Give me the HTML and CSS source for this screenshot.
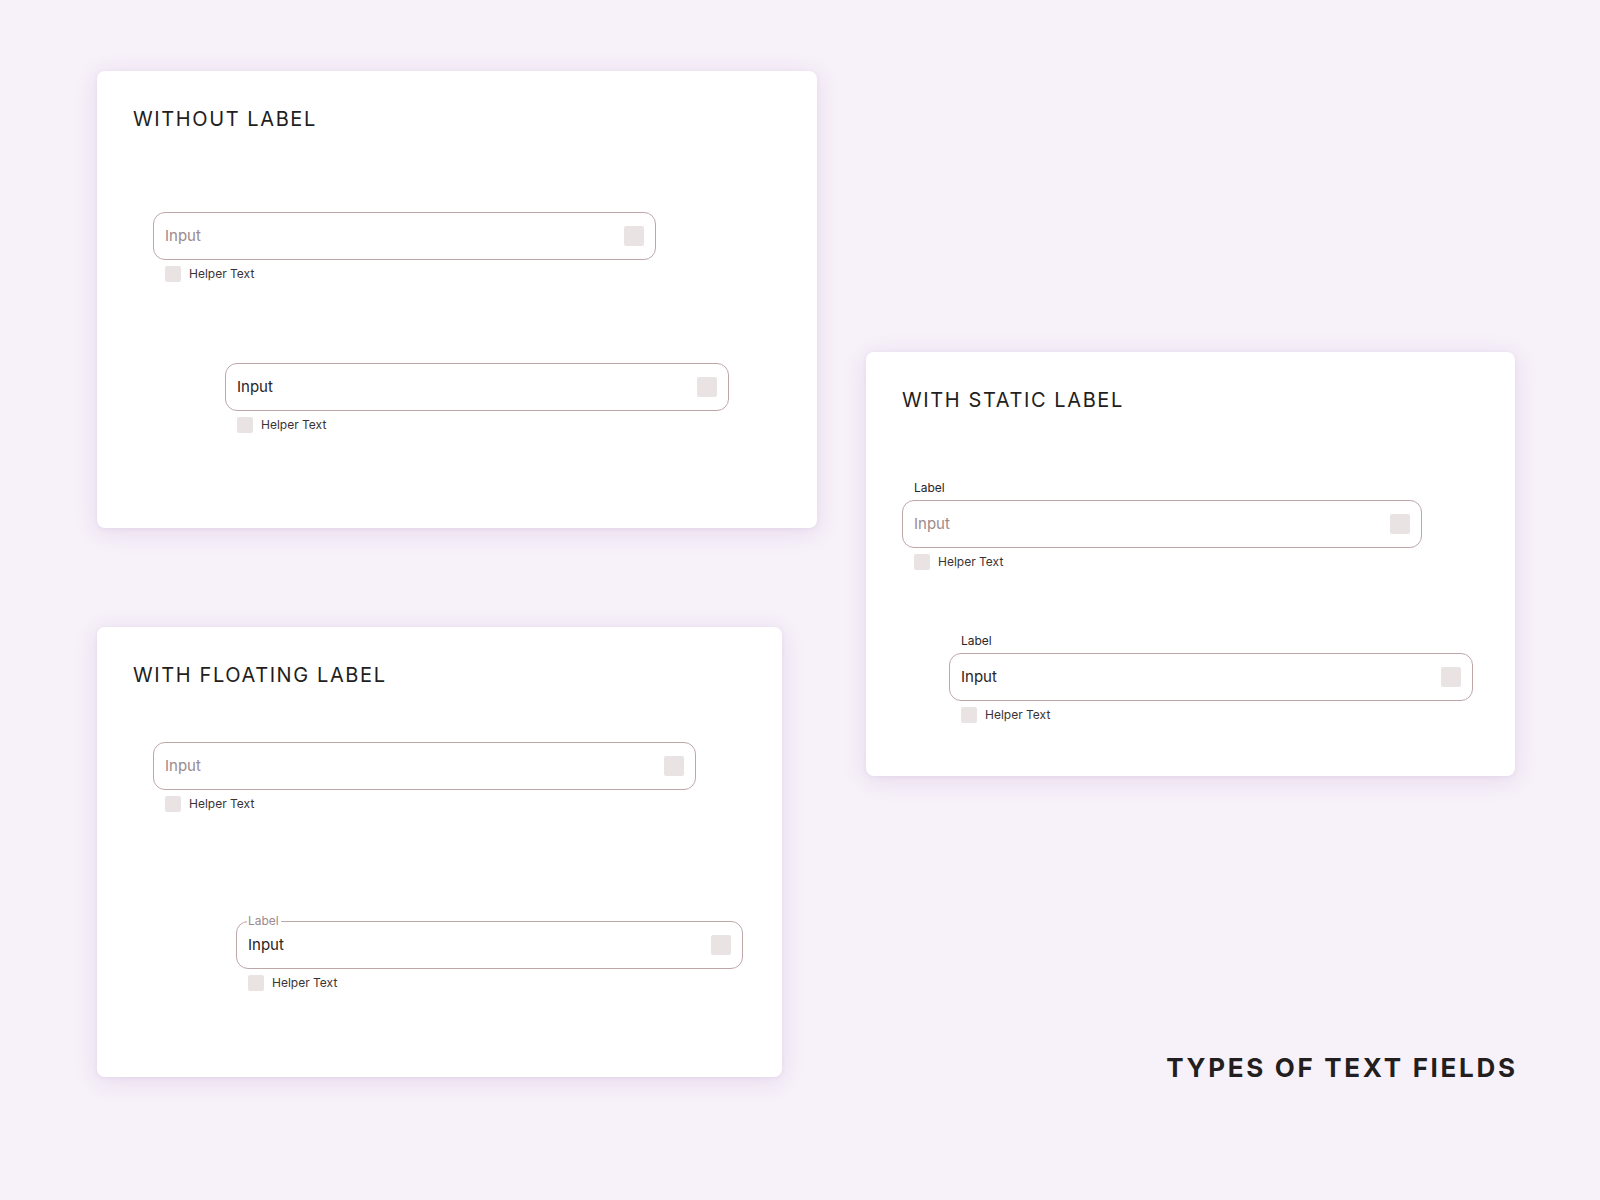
FILE: index.html
```html
<!DOCTYPE html>
<html lang="en">
<head>
<meta charset="utf-8">
<title>Types of Text Fields</title>
<link rel="stylesheet" href="styles.css">
</head>
<body>
<main class="board">
  <div class="col col-left">
    <section class="card card-without">
      <h2 class="card-title">WITHOUT LABEL</h2>
      <div class="field f-without-1">
        <div class="input-box"><span class="input-text placeholder">Input</span><span class="input-icon"></span></div>
        <div class="helper"><span class="helper-icon"></span><span class="helper-text">Helper Text</span></div>
      </div>
      <div class="field f-without-2">
        <div class="input-box"><span class="input-text">Input</span><span class="input-icon"></span></div>
        <div class="helper"><span class="helper-icon"></span><span class="helper-text">Helper Text</span></div>
      </div>
    </section>

    <section class="card card-floating">
      <h2 class="card-title">WITH FLOATING LABEL</h2>
      <div class="field f-floating-1">
        <div class="input-box"><span class="input-text placeholder">Input</span><span class="input-icon"></span></div>
        <div class="helper"><span class="helper-icon"></span><span class="helper-text">Helper Text</span></div>
      </div>
      <div class="field f-floating-2">
        <div class="input-box"><span class="float-label">Label</span><span class="input-text">Input</span><span class="input-icon"></span></div>
        <div class="helper"><span class="helper-icon"></span><span class="helper-text">Helper Text</span></div>
      </div>
    </section>
  </div>

  <div class="col col-right">
    <section class="card card-static">
      <h2 class="card-title">WITH STATIC LABEL</h2>
      <div class="field f-static-1">
        <span class="field-label">Label</span>
        <div class="input-box"><span class="input-text placeholder">Input</span><span class="input-icon"></span></div>
        <div class="helper"><span class="helper-icon"></span><span class="helper-text">Helper Text</span></div>
      </div>
      <div class="field f-static-2">
        <span class="field-label">Label</span>
        <div class="input-box"><span class="input-text">Input</span><span class="input-icon"></span></div>
        <div class="helper"><span class="helper-icon"></span><span class="helper-text">Helper Text</span></div>
      </div>
    </section>
    <h1 class="board-title">TYPES OF TEXT FIELDS</h1>
  </div>
</main>
</body>
</html>
```

FILE: styles.css
```css
* { box-sizing: border-box; }

html, body {
  margin: 0;
  padding: 0;
}

body {
  background: #f7f1f9;
  font-family: Inter, "Noto Sans", "Liberation Sans", sans-serif;
  color: #2a2426;
  width: 1600px;
  height: 1200px;
  overflow: hidden;
}

.board {
  display: flex;
  align-items: flex-start;
  gap: 49px;
  padding: 71px 0 0 97px;
}

.col {
  display: flex;
  flex-direction: column;
  align-items: flex-start;
}

.col-left { gap: 99px; }

.card {
  background: #ffffff;
  border-radius: 8px;
  box-shadow: 0 4px 22px rgba(196, 168, 210, 0.32), 0 1px 4px rgba(196, 168, 210, 0.18);
  padding: 36px 36px 0 36px;
  display: flex;
  flex-direction: column;
  align-items: flex-start;
}

.card-without { width: 720px; height: 457px; }
.card-floating { width: 685px; height: 450px; }
.card-static { width: 649px; height: 424px; margin-top: 281px; }

.card-title {
  margin: 0;
  font-size: 20px;
  line-height: 24px;
  font-weight: 400;
  letter-spacing: 1.6px;
  color: #231e20;
}

.field {
  display: flex;
  flex-direction: column;
  gap: 6px;
}

.f-without-1 { width: 503px; margin: 81px 0 0 20px; }
.f-without-2 { width: 504px; margin: 81px 0 0 92px; }
.f-floating-1 { width: 543px; margin: 55px 0 0 20px; }
.f-floating-2 { width: 507px; margin: 109px 0 0 103px; }
.f-static-1 { width: 520px; margin: 68px 0 0 0; }
.f-static-2 { width: 524px; margin: 63px 0 0 47px; }

.field-label {
  display: block;
  font-size: 12px;
  line-height: 16px;
  color: #2a2426;
  padding-left: 12px;
  margin-bottom: -2px;
}

.input-box {
  position: relative;
  height: 48px;
  border: 1px solid #bfa6a8;
  border-radius: 12px;
  display: flex;
  align-items: center;
  justify-content: space-between;
  padding: 0 11px 0 11px;
}

.input-text {
  font-size: 15px;
  line-height: 20px;
  color: #2a2426;
}

.input-text.placeholder { color: #9c8a8c; }

.input-icon {
  width: 20px;
  height: 20px;
  border-radius: 2px;
  background: #e9e3e4;
}

.float-label {
  position: absolute;
  top: -9px;
  left: 10px;
  padding: 0 2px 0 1px;
  background: #ffffff;
  font-size: 12px;
  line-height: 16px;
  color: #9c8a8c;
}

.helper {
  display: flex;
  align-items: center;
  gap: 8px;
  padding-left: 12px;
  height: 16px;
}

.helper-icon {
  width: 16px;
  height: 16px;
  border-radius: 2px;
  background: #e9e3e4;
}

.helper-text {
  font-size: 12px;
  line-height: 16px;
  color: #3a3234;
}

.board-title {
  margin: 276px -2.7px 0 0;
  align-self: flex-end;
  font-size: 26px;
  line-height: 32px;
  font-weight: 700;
  letter-spacing: 2.7px;
  color: #231e20;
}
```
